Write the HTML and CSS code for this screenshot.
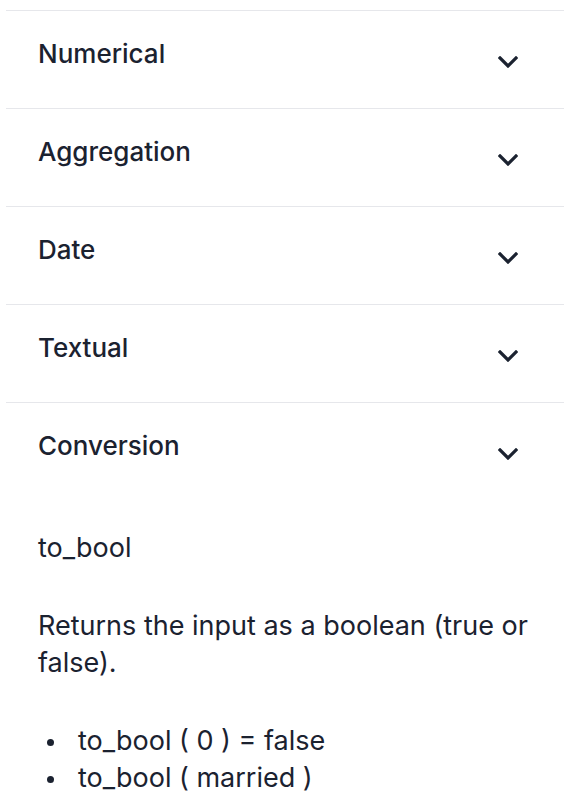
FILE: index.html
```html
<!DOCTYPE html>
<html>
<head>
<meta charset="utf-8">
<link rel="stylesheet" href="styles.css">
</head>
<body>
<div class="accordion">
  <div class="item">
    <div class="header"><span class="title">Numerical</span><svg class="chev" viewBox="0 0 20 12" width="20" height="12"><path d="M2 2 L10 10 L18 2" fill="none" stroke="#1b2230" stroke-width="3.2" stroke-linecap="square"/></svg></div>
  </div>
  <div class="item">
    <div class="header"><span class="title">Aggregation</span><svg class="chev" viewBox="0 0 20 12" width="20" height="12"><path d="M2 2 L10 10 L18 2" fill="none" stroke="#1b2230" stroke-width="3.2" stroke-linecap="square"/></svg></div>
  </div>
  <div class="item">
    <div class="header"><span class="title">Date</span><svg class="chev" viewBox="0 0 20 12" width="20" height="12"><path d="M2 2 L10 10 L18 2" fill="none" stroke="#1b2230" stroke-width="3.2" stroke-linecap="square"/></svg></div>
  </div>
  <div class="item">
    <div class="header"><span class="title">Textual</span><svg class="chev" viewBox="0 0 20 12" width="20" height="12"><path d="M2 2 L10 10 L18 2" fill="none" stroke="#1b2230" stroke-width="3.2" stroke-linecap="square"/></svg></div>
  </div>
  <div class="item open">
    <div class="header"><span class="title">Conversion</span><svg class="chev" viewBox="0 0 20 12" width="20" height="12"><path d="M2 2 L10 10 L18 2" fill="none" stroke="#1b2230" stroke-width="3.2" stroke-linecap="square"/></svg></div>
    <div class="content">
      <p class="fn">to_bool</p>
      <p class="desc">Returns the input as a boolean (true or false).</p>
      <ul class="examples">
        <li>to_bool ( 0 ) = false</li>
        <li>to_bool ( married )</li>
      </ul>
    </div>
  </div>
</div>
</body>
</html>
```
FILE: styles.css
```css
html, body {
  margin: 0;
  padding: 0;
  background: #ffffff;
}
body {
  font-family: Inter, "Noto Sans", sans-serif;
  color: #1b2230;
}
.accordion {
  padding: 10px 6px 0;
}
.item {
  border-top: 1px solid #e6e7eb;
}
.header {
  height: 97px;
  display: flex;
  align-items: center;
  justify-content: space-between;
  padding: 0 46px 0 32px;
  box-sizing: border-box;
}
.title {
  font-size: 26px;
  font-weight: 500;
  letter-spacing: 0;
  line-height: 39px;
  margin-top: -12px;
}
.chev {
  display: block;
  margin-top: 4px;
}
.content {
  padding: 0 32px;
  font-size: 27px;
  line-height: 37px;
  letter-spacing: 0;
}
.content p {
  margin: 0;
}
.fn {
  margin-top: 29px !important;
}
.desc {
  margin-top: 41px !important;
  padding-right: 0;
}
.examples {
  margin: 41px 0 0;
  padding: 0;
  list-style: none;
}
.examples li {
  display: flex;
  align-items: center;
}
.examples li::before {
  content: "";
  width: 7px;
  height: 7px;
  border-radius: 50%;
  background: #1b2230;
  margin: 4px 24px 0 9px;
  flex: none;
}
```
